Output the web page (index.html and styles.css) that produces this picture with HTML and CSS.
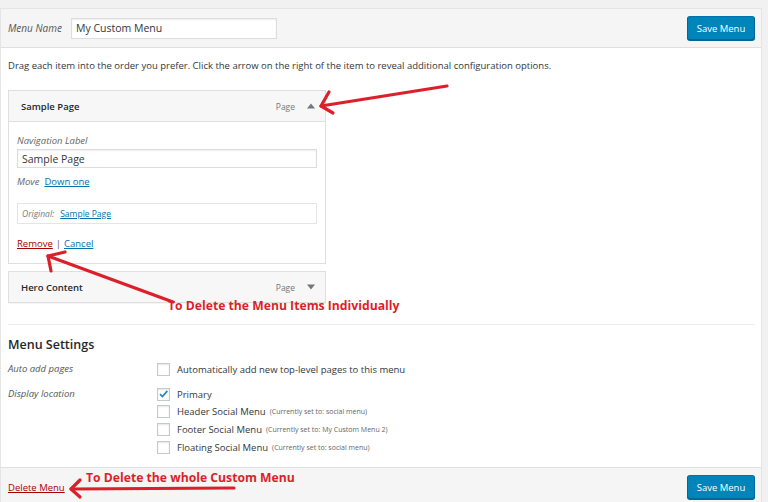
FILE: index.html
```html
<!DOCTYPE html>
<html lang="en">
<head>
<meta charset="utf-8">
<title>Menus</title>
<link rel="stylesheet" href="styles.css">
</head>
<body>
<div class="page">
  <div class="menu-box">
    <div class="box-header">
      <label class="name-label">Menu Name</label>
      <div class="text-input name-input">My Custom Menu</div>
      <button class="btn-primary">Save Menu</button>
    </div>
    <div class="box-body">
      <p class="instructions">Drag each item into the order you prefer. Click the arrow on the right of the item to reveal additional configuration options.</p>
      <ul class="menu-items">
        <li class="item">
          <div class="item-bar">
            <span class="item-title">Sample Page</span>
            <span class="item-type">Page</span>
            <svg class="toggle" viewBox="0 0 8 6" width="8" height="6"><path d="M0 5.5 L4 0.5 L8 5.5 Z"/></svg>
          </div>
          <div class="item-settings">
            <div class="field-label">Navigation Label</div>
            <div class="text-input field-input">Sample Page</div>
            <div class="move-row"><span class="move-label">Move</span><a class="link">Down one</a></div>
            <div class="original"><span class="orig-label">Original:</span><a class="link">Sample Page</a></div>
            <div class="actions"><a class="remove">Remove</a><span class="sep">|</span><a class="link">Cancel</a></div>
          </div>
        </li>
        <li class="item">
          <div class="item-bar">
            <span class="item-title">Hero Content</span>
            <span class="item-type">Page</span>
            <svg class="toggle" viewBox="0 0 8 6" width="8" height="6"><path d="M0 0.5 L4 5.5 L8 0.5 Z"/></svg>
          </div>
        </li>
      </ul>
      <div class="menu-settings">
        <h3 class="settings-title">Menu Settings</h3>
        <div class="settings-grid">
          <div class="row-label">Auto add pages</div>
          <div class="options">
            <div class="option"><span class="checkbox"></span><span>Automatically add new top-level pages to this menu</span></div>
          </div>
          <div class="row-label loc-label">Display location</div>
          <div class="options loc-options">
            <div class="option"><span class="checkbox checked"><svg viewBox="0 0 12 12" width="12" height="12"><path d="M2.2 6.2 L4.8 8.8 L10.2 2.6"/></svg></span><span>Primary</span></div>
            <div class="option"><span class="checkbox"></span><span>Header Social Menu</span><span class="note-small">(Currently set to: social menu)</span></div>
            <div class="option"><span class="checkbox"></span><span>Footer Social Menu</span><span class="note-small">(Currently set to: My Custom Menu 2)</span></div>
            <div class="option"><span class="checkbox"></span><span>Floating Social Menu</span><span class="note-small">(Currently set to: social menu)</span></div>
          </div>
        </div>
      </div>
    </div>
    <div class="box-footer">
      <a class="delete-menu">Delete Menu</a>
      <button class="btn-primary">Save Menu</button>
    </div>
  </div>

  <svg class="annotations" viewBox="0 0 768 502" width="768" height="502">
    <g fill="none" stroke="#dc1f2a" stroke-width="3.2" stroke-linecap="round" stroke-linejoin="round">
      <path d="M447 86 L321 106"/>
      <path d="M329 92 L321 106 L333 113"/>
      <path d="M173 302 L48 256"/>
      <path d="M65 252 L48 256 L51 271"/>
      <path d="M234 488 L71 489"/>
      <path d="M80 480 L71 489 L80 497"/>
    </g>
  </svg>
  <div class="callout callout-items">To Delete the Menu Items Individually</div>
  <div class="callout callout-menu">To Delete the whole Custom Menu</div>
</div>
</body>
</html>
```

FILE: styles.css
```css
* { box-sizing: border-box; }

html, body {
  margin: 0;
  padding: 0;
}

body {
  background: #f1f1f1;
  font-family: "Open Sans", "Noto Sans", sans-serif;
  font-size: 9.5px;
  color: #23282d;
}

.page {
  position: relative;
  width: 768px;
  height: 502px;
  overflow: hidden;
}

.menu-box {
  margin: 8px 6px 0 0;
  border: 1px solid #e5e5e5;
  background: #fff;
}

/* header */
.box-header {
  display: flex;
  align-items: center;
  height: 39px;
  padding: 0 6px 0 7px;
  background: #f5f5f5;
  border-bottom: 1px solid #dfdfdf;
}

.name-label {
  font-style: italic;
  font-size: 10px;
  color: #555;
  width: 63px;
}

.text-input {
  display: flex;
  align-items: center;
  background: #fff;
  border: 1px solid #ddd;
  box-shadow: inset 0 1px 2px rgba(0, 0, 0, 0.07);
  color: #32373c;
}

.name-input {
  width: 206px;
  height: 21px;
  padding: 0 4px;
  font-size: 10.5px;
}

.btn-primary {
  margin-left: auto;
  width: 68px;
  height: 24px;
  padding: 0;
  background: #0085ba;
  border: 1px solid #0073aa;
  border-color: #0073aa #006799 #006799;
  border-radius: 3px;
  box-shadow: 0 1px 0 #006799;
  color: #fff;
  font-family: inherit;
  font-size: 9.5px;
}

/* body */
.box-body {
  padding: 0 6px 11px 7px;
}

.instructions {
  margin: 11px 0 17px;
  line-height: 14px;
  color: #32373c;
}

.menu-items {
  list-style: none;
  margin: 0;
  padding: 0;
  width: 318px;
}

.item + .item {
  margin-top: 7px;
}

.item-bar {
  display: flex;
  align-items: center;
  height: 32px;
  padding: 0 10px 0 12px;
  background: #f7f7f7;
  border: 1px solid #dfdfdf;
  box-shadow: 0 1px 1px rgba(0, 0, 0, 0.04);
}

.item-title {
  font-weight: 600;
  font-size: 9.5px;
  color: #23282d;
}

.item-type {
  margin-left: auto;
  color: #72777c;
  font-size: 8.5px;
}

.toggle {
  margin-left: 12px;
  fill: #72777c;
}

.item-settings {
  padding: 12px 8px 13px 8px;
  border: 1px solid #dfdfdf;
  border-top: none;
  background: #fff;
}

.field-label {
  line-height: 13px;
  font-style: italic;
  color: #666;
}

.field-input {
  margin-top: 2px;
  height: 19px;
  padding: 0 4px;
  font-size: 10.5px;
}

.move-row {
  margin-top: 7px;
  line-height: 13px;
  display: flex;
  gap: 5px;
}

.move-label {
  font-style: italic;
  color: #666;
}

.link {
  color: #0073aa;
  text-decoration: underline;
}

.original {
  margin-top: 15px;
  height: 21px;
  display: flex;
  align-items: center;
  gap: 6px;
  padding: 0 4px;
  border: 1px solid #e5e5e5;
  font-size: 8.5px;
}

.orig-label {
  font-style: italic;
  color: #777;
}

.actions {
  margin-top: 13px;
  line-height: 13px;
  display: flex;
  gap: 3px;
}

.remove {
  color: #a00;
  text-decoration: underline;
}

.sep {
  color: #555;
}

/* menu settings */
.menu-settings {
  margin-top: 21px;
  border-top: 1px solid #eee;
  padding-top: 11px;
}

.settings-title {
  margin: 0;
  font-size: 12.5px;
  font-weight: 600;
  line-height: 18px;
  color: #23282d;
}

.settings-grid {
  display: grid;
  grid-template-columns: 149px 1fr;
  row-gap: 7px;
  margin-top: 7px;
}

.row-label {
  font-style: italic;
  color: #555;
  line-height: 16px;
}

.options {
  display: flex;
  flex-direction: column;
}

.option {
  display: flex;
  align-items: center;
  height: 17.6px;
  color: #32373c;
}

.checkbox {
  flex: none;
  width: 13px;
  height: 13px;
  margin-right: 7px;
  border: 1px solid #c4c9ce;
  background: #fff;
  box-shadow: inset 0 1px 2px rgba(0, 0, 0, 0.1);
  display: flex;
  align-items: center;
  justify-content: center;
}

.checkbox svg path {
  fill: none;
  stroke: #1e8cbe;
  stroke-width: 1.8;
}

.note-small {
  margin-left: 4px;
  font-size: 7px;
  color: #666;
}

/* footer */
.box-footer {
  display: flex;
  align-items: center;
  height: 40px;
  padding: 0 6px 0 7px;
  background: #f5f5f5;
  border-top: 1px solid #dfdfdf;
}

.delete-menu {
  color: #a00;
  text-decoration: underline;
}

/* annotation overlays */
.annotations {
  position: absolute;
  left: 0;
  top: 0;
  pointer-events: none;
}

.callout {
  position: absolute;
  color: #dc1f2a;
  font-weight: 700;
  font-size: 12.2px;
  line-height: 16px;
  white-space: nowrap;
}

.callout-items {
  left: 168px;
  top: 298px;
}

.callout-menu {
  left: 86px;
  top: 470px;
}
```
